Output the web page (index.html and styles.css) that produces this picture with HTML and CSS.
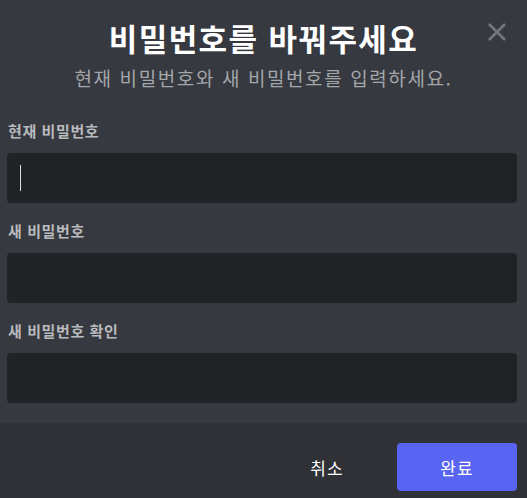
FILE: index.html
```html
<!DOCTYPE html>
<html lang="ko">
<head>
<meta charset="utf-8">
<title>비밀번호를 바꿔주세요</title>
<link rel="stylesheet" href="styles.css">
</head>
<body>
<div class="modal">
  <header class="modal-header">
    <h1 class="title">비밀번호를 바꿔주세요</h1>
    <p class="subtitle">현재 비밀번호와 새 비밀번호를 입력하세요.</p>
    <button class="close" aria-label="닫기">
      <svg width="20" height="20" viewBox="0 0 20 20"><path d="M2 2 L18 18 M18 2 L2 18" stroke="currentColor" stroke-width="2.6" stroke-linecap="butt"/></svg>
    </button>
  </header>
  <form class="form">
    <div class="field">
      <label class="label">현재 비밀번호</label>
      <div class="input-wrap">
        <input class="input" type="password">
        <span class="caret"></span>
      </div>
    </div>
    <div class="field">
      <label class="label">새 비밀번호</label>
      <div class="input-wrap"><input class="input" type="password"></div>
    </div>
    <div class="field">
      <label class="label">새 비밀번호 확인</label>
      <div class="input-wrap"><input class="input" type="password"></div>
    </div>
  </form>
  <footer class="footer">
    <button class="btn-cancel" type="button">취소</button>
    <button class="btn-primary" type="button">완료</button>
  </footer>
</div>
</body>
</html>
```
FILE: styles.css
```css
html, body {
  margin: 0;
  padding: 0;
  background: #36393f;
}
body {
  font-family: "Noto Sans CJK KR", "Noto Sans", sans-serif;
  color: #dcddde;
}
.modal {
  width: 527px;
  height: 498px;
  display: flex;
  flex-direction: column;
  background: #36393f;
  overflow: hidden;
}
.modal-header {
  position: relative;
  padding-top: 20px;
  text-align: center;
}
.title {
  margin: 0;
  font-size: 31px;
  line-height: 36px;
  letter-spacing: 1.4px;
  font-weight: 700;
  color: #ffffff;
}
.subtitle {
  margin: 10px 0 0;
  font-size: 19px;
  line-height: 24px;
  letter-spacing: 1.6px;
  font-weight: 400;
  color: #a3a6aa;
}
.close {
  position: absolute;
  top: 22px;
  right: 20px;
  width: 20px;
  height: 20px;
  padding: 0;
  border: 0;
  background: transparent;
  color: #72767d;
  display: flex;
}
.form {
  margin: 0;
  padding: 31px 10px 2px 7px;
}
.field {
  display: flex;
  flex-direction: column;
  margin-bottom: 18px;
}
.label {
  padding-left: 1px;
  font-size: 15px;
  line-height: 20px;
  letter-spacing: 0.6px;
  font-weight: 700;
  color: #b9bbbe;
  margin-bottom: 12px;
}
.input-wrap {
  position: relative;
}
.input {
  display: block;
  box-sizing: border-box;
  width: 100%;
  height: 50px;
  border: 0;
  border-radius: 4px;
  background: #202225;
  color: #dcddde;
  outline: none;
  padding: 0 13px;
  font-size: 16px;
}
.caret {
  position: absolute;
  left: 13px;
  top: 12px;
  width: 1px;
  height: 26px;
  background: #dcddde;
}
.footer {
  flex: 1;
  background: #2f3136;
  display: flex;
  justify-content: flex-end;
  align-items: flex-start;
  padding: 20px 10px 0 0;
}
.btn-cancel {
  min-width: 96px;
  height: 48px;
  margin-right: 22px;
  padding: 0;
  border: 0;
  background: transparent;
  color: #ffffff;
  font-family: inherit;
  font-size: 17px;
  letter-spacing: 1px;
  font-weight: 400;
}
.btn-primary {
  width: 120px;
  height: 48px;
  padding: 0;
  border: 0;
  border-radius: 4px;
  background: #5865f2;
  color: #ffffff;
  font-family: inherit;
  font-size: 17px;
  letter-spacing: 1px;
  font-weight: 400;
}
```
